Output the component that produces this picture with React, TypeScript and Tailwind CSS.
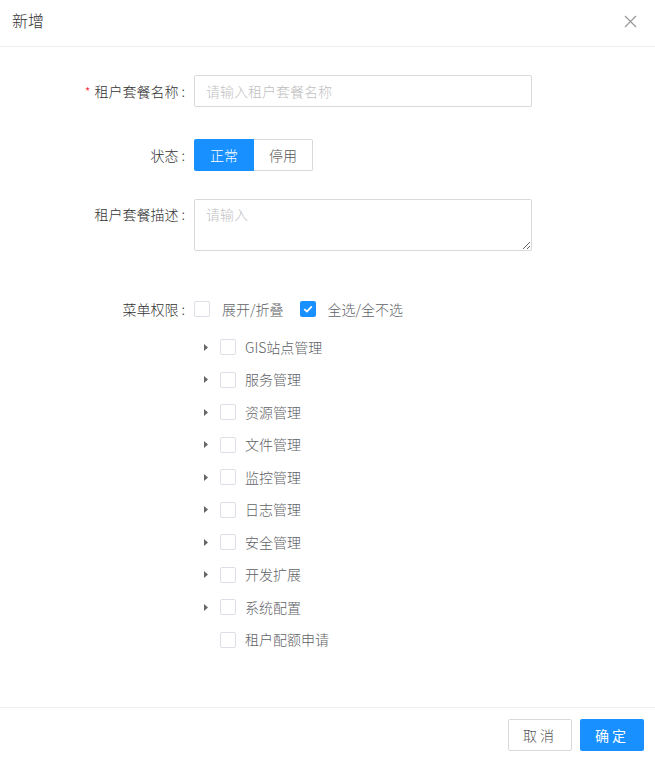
import { useState } from "react";

const menus = [
  { name: "GIS站点管理", hasChildren: true },
  { name: "服务管理", hasChildren: true },
  { name: "资源管理", hasChildren: true },
  { name: "文件管理", hasChildren: true },
  { name: "监控管理", hasChildren: true },
  { name: "日志管理", hasChildren: true },
  { name: "安全管理", hasChildren: true },
  { name: "开发扩展", hasChildren: true },
  { name: "系统配置", hasChildren: true },
  { name: "租户配额申请", hasChildren: false },
];

function Checkbox({ checked }: { checked?: boolean }) {
  if (checked) {
    return (
      <span className="flex h-4 w-4 items-center justify-center rounded-[2px] bg-[#1890ff]">
        <svg width="10" height="8" viewBox="0 0 10 8">
          <path d="M1.2 4.2 L3.9 6.6 L8.8 1.4" fill="none" stroke="#fff" strokeWidth="1.8" />
        </svg>
      </span>
    );
  }
  return <span className="block h-4 w-4 rounded-[2px] border border-[#dcdfe6] bg-white" />;
}

function Label({ text, required, top }: { text: string; required?: boolean; top?: boolean }) {
  return (
    <label className={top ? "w-[186px] pr-[1px] pt-[5px] text-right" : "w-[186px] pr-[1px] text-right"}>
      {required && <span className="mr-1 text-[13px] text-[#f5222d]">*</span>}
      {text}
      <span className="ml-[3px]">:</span>
    </label>
  );
}

export default function App() {
  const [status, setStatus] = useState("normal");

  return (
    <div
      className="flex h-[758px] w-[655px] flex-col bg-white text-[14px] font-light text-[#333]"
      style={{ fontFamily: '"Noto Sans CJK SC", "Liberation Sans", sans-serif' }}
    >
      {/* header */}
      <div className="flex h-[47px] shrink-0 items-center justify-between border-b border-[#eee] pb-[7px] pl-3 pr-[18px]">
        <span className="text-[16px] text-[#333]">新增</span>
        <svg width="13" height="13" viewBox="0 0 13 13" className="mt-[3px]">
          <path d="M1 1 L12 12 M12 1 L1 12" stroke="#999" strokeWidth="1.2" />
        </svg>
      </div>

      {/* body */}
      <div className="flex-1 pt-[28px]">
        <div className="flex items-center">
          <Label text="租户套餐名称" required />
          <input
            className="ml-2 h-8 w-[338px] rounded-[2px] border border-[#d9d9d9] px-[11px] text-[14px] outline-none placeholder:text-[#bfbfbf]"
            placeholder="请输入租户套餐名称"
          />
        </div>

        <div className="mt-[32px] flex items-center">
          <Label text="状态" />
          <div className="ml-2 flex h-8">
            <button
              onClick={() => setStatus("normal")}
              className={
                status === "normal"
                  ? "w-[60px] rounded-l-[2px] bg-[#1890ff] text-white"
                  : "w-[60px] rounded-l-[2px] border border-[#d9d9d9] text-[#555]"
              }
            >
              正常
            </button>
            <button
              onClick={() => setStatus("stop")}
              className={
                status === "stop"
                  ? "w-[59px] rounded-r-[2px] bg-[#1890ff] text-white"
                  : "w-[59px] rounded-r-[2px] border border-l-0 border-[#d9d9d9] text-[#555]"
              }
            >
              停用
            </button>
          </div>
        </div>

        <div className="mt-[28px] flex items-start">
          <Label text="租户套餐描述" top />
          <textarea
            className="ml-2 h-[52px] w-[338px] resize-y rounded-[2px] border border-[#d9d9d9] px-[11px] py-[4px] text-[14px] outline-none placeholder:text-[#bfbfbf]"
            placeholder="请输入"
          />
        </div>

        <div className="mt-[42px] flex h-8 items-center">
          <Label text="菜单权限" />
          <div className="ml-2 flex items-center">
            <Checkbox />
            <span className="ml-3 text-[#606266]">展开/折叠</span>
            <span className="ml-[16px]">
              <Checkbox checked />
            </span>
            <span className="ml-3 text-[#606266]">全选/全不选</span>
          </div>
        </div>

        <div className="mt-[6px] ml-[201px]">
          {menus.map((m) => (
            <div key={m.name} className="flex h-[32.5px] items-center">
              <span className="flex w-[19px] items-center">
                {m.hasChildren && (
                  <svg width="4" height="7" viewBox="0 0 4 7" className="ml-[3px]">
                    <path d="M0 0 L4 3.5 L0 7 Z" fill="#666" />
                  </svg>
                )}
              </span>
              <Checkbox />
              <span className="ml-[9px] text-[#606266]">{m.name}</span>
            </div>
          ))}
        </div>
      </div>

      {/* footer */}
      <div className="flex h-[51px] shrink-0 items-start justify-end gap-2 border-t border-[#eee] pr-[11px] pt-[11px]">
        <button className="h-8 w-[64px] rounded-[2px] border border-[#d9d9d9] text-[#555] tracking-[3px]">
          取消
        </button>
        <button className="h-8 w-[64px] rounded-[2px] bg-[#1890ff] font-normal text-white tracking-[3px]">
          确定
        </button>
      </div>
    </div>
  );
}
